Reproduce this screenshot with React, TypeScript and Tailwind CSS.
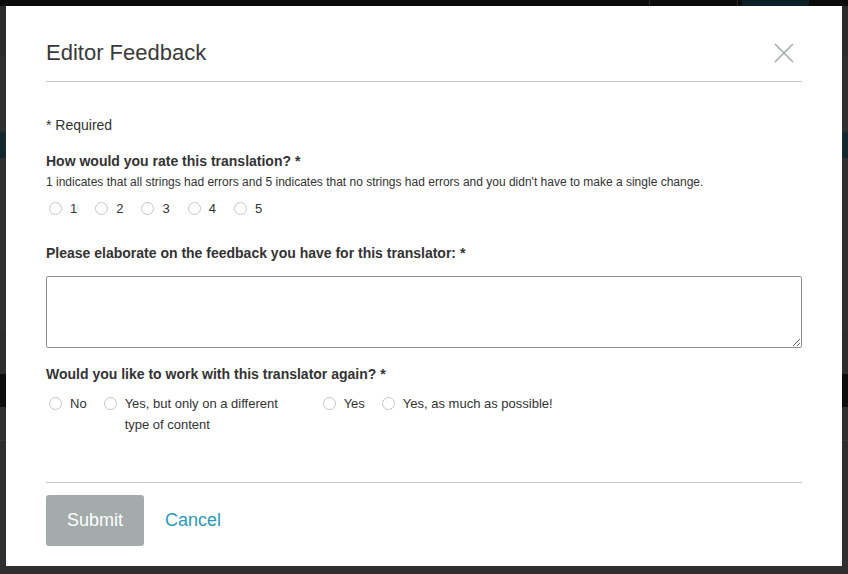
import { useState } from "react";

type Option = { value: string; label: string; labelClass?: string };

const ratingOptions: Option[] = ["1", "2", "3", "4", "5"].map((n) => ({ value: n, label: n }));

const againOptions: Option[] = [
	{ value: "no", label: "No" },
	{ value: "different", label: "Yes, but only on a different type of content", labelClass: "w-[181px]" },
	{ value: "yes", label: "Yes" },
	{ value: "lots", label: "Yes, as much as possible!" },
];

function RadioGroup({ name, options, gap }: { name: string; options: Option[]; gap: string }) {
	const [picked, setPicked] = useState<string | null>(null);
	return (
		<div className={`flex items-start ${gap}`}>
			{options.map((o) => (
				<label key={o.value} className="flex items-start gap-[8px] cursor-pointer text-[13px] leading-[21px] text-[#333]">
					<input type="radio" name={name} value={o.value} className="sr-only" onChange={() => setPicked(o.value)} />
					<span className="mt-[4px] ml-[3px] w-[13px] h-[13px] shrink-0 rounded-full border border-[#c6c6c6] bg-white flex items-center justify-center">
						{picked === o.value && <span className="w-[7px] h-[7px] rounded-full bg-[#2a9ab8]" />}
					</span>
					<span className={o.labelClass}>{o.label}</span>
				</label>
			))}
		</div>
	);
}

export default function App() {
	return (
		<div className="relative w-full h-[574px] overflow-hidden bg-[#2f2f2f]" style={{ fontFamily: '"Liberation Sans", Arial, sans-serif' }}>
			{/* page behind the overlay */}
			<div className="absolute inset-0 pointer-events-none">
				<div className="h-[6px] bg-[#0b0b0b] relative">
					<div className="absolute left-[649px] top-0 w-px h-full bg-[#2a2a2a]" />
					<div className="absolute left-[737px] top-0 w-px h-full bg-[#2a2a2a]" />
					<div className="absolute left-[742px] top-0 w-[67px] h-full bg-[#0c1f26]" />
				</div>
				<div className="h-[50px] bg-[#2b2c2c]" />
				<div className="absolute top-[132px] left-0 w-full h-[26px] bg-[#13292f]" />
				<div className="absolute top-[333px] left-0 w-full h-[41px] bg-[#2c2e2e]" />
				<div className="absolute top-[374px] left-0 w-full h-[33px] bg-[#0d0f0f]" />
				<div className="absolute top-[440px] left-0 w-full h-px bg-[#3a3a3a]" />
			</div>

			<div className="relative p-[6px]">
				<div className="w-[836px] h-[560px] bg-white px-[40px] flex flex-col">
					<div className="flex items-start justify-between pt-[33px] pb-[14px] border-b border-[#c8c8c8]">
						<h1 className="text-[22px] leading-[28px] text-[#3a3a3a]">Editor Feedback</h1>
						<button className="mt-[4px] mr-[8px] text-[#a3abab]" aria-label="Close">
							<svg width="20" height="20" viewBox="0 0 20 20" fill="none" stroke="currentColor" strokeWidth="1.6">
								<path d="M1 1L19 19M19 1L1 19" />
							</svg>
						</button>
					</div>

					<p className="mt-[33px] text-[14px] leading-[20px] text-[#333]">* Required</p>

					<h2 className="mt-[16px] text-[14px] leading-[20px] font-bold text-[#333]">How would you rate this translation? *</h2>
					<p className="mt-[3px] text-[12px] leading-[16px] text-[#333]">
						1 indicates that all strings had errors and 5 indicates that no strings had errors and you didn't have to make a single change.
					</p>
					<div className="mt-[8px]">
						<RadioGroup name="rating" options={ratingOptions} gap="gap-[15px]" />
					</div>

					<h2 className="mt-[24px] text-[14px] leading-[20px] font-bold text-[#333]">Please elaborate on the feedback you have for this translator: *</h2>
					<textarea className="mt-[13px] w-full h-[72px] border border-[#8f8f8f] rounded-[2px] outline-none text-[13px] p-2" />

					<h2 className="mt-[16px] text-[14px] leading-[20px] font-bold text-[#333]">Would you like to work with this translator again? *</h2>
					<div className="mt-[9px]">
						<RadioGroup name="again" options={againOptions} gap="gap-[14px]" />
					</div>

					<div className="mt-[47px] border-t border-[#c8c8c8] pt-[12px] flex items-center gap-[21px]">
						<button className="w-[98px] h-[51px] rounded-[3px] bg-[#a3abab] text-white text-[18px]">Submit</button>
						<button className="text-[18px] text-[#2a9ab8]">Cancel</button>
					</div>
				</div>
			</div>
		</div>
	);
}
